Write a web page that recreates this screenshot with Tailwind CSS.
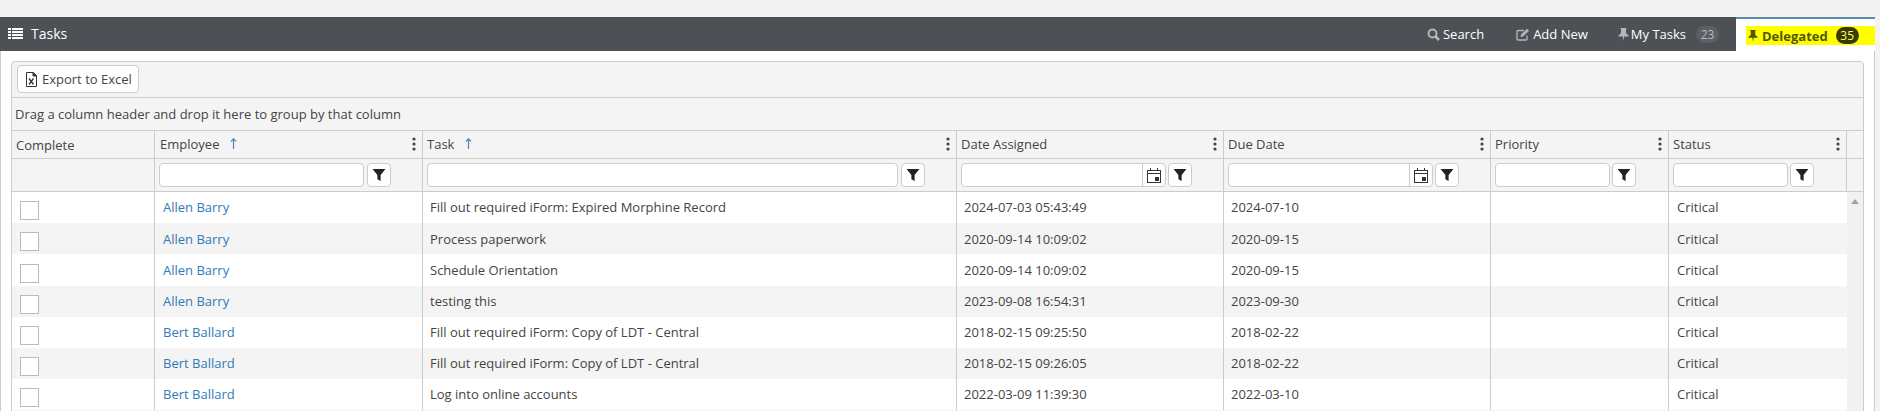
<!DOCTYPE html>
<html>
<head>
<meta charset="utf-8">
<script src="https://cdn.jsdelivr.net/npm/@tailwindcss/browser@4"></script>
</head>
<body class="h-[411px] overflow-hidden bg-[#f3f3f3] pt-[17px] font-['Open_Sans',sans-serif] text-[13px] leading-[18px] text-[#444]">
<div class="mr-[5px]">
  <header class="flex h-[34px] bg-[#4d5055] text-white">
    <div class="flex items-center flex-1 pl-[8px] gap-[8px]">
      <svg class="w-[15px] h-[12px]" viewBox="0 0 15 12" fill="#fff"><path d="M0 0h3v2H0zM4 0h11v2H4zM0 3h3v2H0zM4 3h11v2H4zM0 6h3v2H0zM4 6h11v2H4zM0 9h3v2H0zM4 9h11v2H4z"/></svg>
      <span class="text-[14px]">Tasks</span>
    </div>
    <nav class="flex items-center">
      <a class="flex items-center gap-[3px] mr-[32px]">
        <svg class="w-[13px] h-[13px]" viewBox="0 0 13 13" fill="none" stroke="#b5b7ba" stroke-width="2"><circle cx="5.5" cy="5.5" r="4"/><path d="M8.5 8.5l3.5 3.500" stroke-width="2.6"/></svg>
        <span>Search</span>
      </a>
      <a class="flex items-center gap-[3px] mr-[30px]">
        <svg class="w-[14px] h-[13px]" viewBox="0 0 14 13" fill="none" stroke="#b5b7ba" stroke-width="1.3"><path d="M11 7.5V11a1 1 0 0 1-1 1H2a1 1 0 0 1-1-1V3.500a1 1 0 0 1 1-1h6"/><path d="M5 6.500L11 .8l2 2-6 5.700-2.500.5z" fill="#b5b7ba" stroke="none"/></svg>
        <span>Add New</span>
      </a>
      <a class="flex items-center gap-[2px] mr-[17px]">
        <svg class="w-[11px] h-[13px]" viewBox="0 0 11 13" fill="#b5b7ba"><path d="M2.500 0h6v1H8v4l2.500 2.500V8.500H6.200L5.500 13l-.7-4.500H.5v-1L3 5V1h-.5z"/></svg>
        <span>My Tasks</span>
        <span class="ml-[8px] w-[23px] h-[17px] rounded-full bg-[#5c5f63] text-[#b8babc] text-[12px] leading-[17px] text-center">23</span>
      </a>
      <a class="w-[139px] h-[34px] bg-white border-t-2 border-[#5a8ba6] pt-[7px] pl-[10px]">
        <span class="flex items-center h-[19px] bg-[#ffff00] text-[#555500] font-bold">
          <svg class="ml-[2px] w-[10px] h-[12px] mr-[4px]" viewBox="0 0 11 13" fill="#555500"><path d="M2.500 0h6v1H8v4l2.500 2.500V8.500H6.200L5.500 13l-.7-4.500H.5v-1L3 5V1h-.5z"/></svg>
          <span>Delegated</span>
          <span class="ml-[8px] w-[23px] h-[17px] rounded-full bg-[#3a3a00] text-[#ffff66] font-normal text-[12px] leading-[17px] text-center">35</span>
        </span>
      </a>
    </nav>
  </header>

  <main class="h-[360px] overflow-hidden bg-white border-x border-[#ccc] pt-[10px] pl-[10px] pr-[10px]">
    <section class="border border-[#ccc] rounded-t-[4px] bg-[#f4f4f4]">
      <div class="h-[36px] flex items-start pt-[3px] pl-[5px] border-b border-[#ccc]">
        <button class="flex items-center gap-[4px] h-[28px] w-[122px] pl-[7px] bg-white border border-[#ccc] rounded-[4px]">
          <svg class="w-[13px] h-[15px]" viewBox="0 0 13 15" fill="none" stroke="#333"><path d="M1.500.5h7l3 3v11h-10z"/><path d="M8 .5v3.500h3.500" fill="#333"/><path d="M4 6.500l4.500 6M8.500 6.500l-4.500 6" stroke-width="1.300"/></svg>
          <span>Export to Excel</span>
        </button>
      </div>
      <div class="h-[33px] flex items-center pl-[3px] border-b border-[#ccc]">Drag a column header and drop it here to group by that column</div>

      <div class="grid grid-cols-[143px_268px_534px_267px_267px_178px_178px_16px] h-[28px] border-b border-[#ccc] items-stretch">
        <div class="flex items-center pl-[4px] border-r border-[#ccc]">Complete</div>
        <div class="flex items-center pb-[2px] pl-[5px] pr-[6px] border-r border-[#ccc]"><span>Employee</span><svg class="ml-[11px] w-[7px] h-[11px]" viewBox="0 0 7 11" fill="none" stroke="#4a86c5" stroke-width="1.200"><path d="M3.500 11V1M1 3.500L3.500.8 6 3.500"/></svg><svg class="ml-auto w-[4px] h-[14px]" viewBox="0 0 4 14" fill="#444"><circle cx="2" cy="2" r="1.600"/><circle cx="2" cy="7" r="1.600"/><circle cx="2" cy="12" r="1.600"/></svg></div>
        <div class="flex items-center pb-[2px] pl-[4px] pr-[6px] border-r border-[#ccc]"><span>Task</span><svg class="ml-[11px] w-[7px] h-[11px]" viewBox="0 0 7 11" fill="none" stroke="#4a86c5" stroke-width="1.200"><path d="M3.500 11V1M1 3.500L3.500.8 6 3.500"/></svg><svg class="ml-auto w-[4px] h-[14px]" viewBox="0 0 4 14" fill="#444"><circle cx="2" cy="2" r="1.600"/><circle cx="2" cy="7" r="1.600"/><circle cx="2" cy="12" r="1.600"/></svg></div>
        <div class="flex items-center justify-between pb-[2px] pl-[4px] pr-[6px] border-r border-[#ccc]"><span>Date Assigned</span><svg class="w-[4px] h-[14px]" viewBox="0 0 4 14" fill="#444"><circle cx="2" cy="2" r="1.600"/><circle cx="2" cy="7" r="1.600"/><circle cx="2" cy="12" r="1.600"/></svg></div>
        <div class="flex items-center justify-between pb-[2px] pl-[4px] pr-[6px] border-r border-[#ccc]"><span>Due Date</span><svg class="w-[4px] h-[14px]" viewBox="0 0 4 14" fill="#444"><circle cx="2" cy="2" r="1.600"/><circle cx="2" cy="7" r="1.600"/><circle cx="2" cy="12" r="1.600"/></svg></div>
        <div class="flex items-center justify-between pb-[2px] pl-[4px] pr-[6px] border-r border-[#ccc]"><span>Priority</span><svg class="w-[4px] h-[14px]" viewBox="0 0 4 14" fill="#444"><circle cx="2" cy="2" r="1.600"/><circle cx="2" cy="7" r="1.600"/><circle cx="2" cy="12" r="1.600"/></svg></div>
        <div class="flex items-center justify-between pb-[2px] pl-[4px] pr-[6px] border-r border-[#ccc]"><span>Status</span><svg class="w-[4px] h-[14px]" viewBox="0 0 4 14" fill="#444"><circle cx="2" cy="2" r="1.600"/><circle cx="2" cy="7" r="1.600"/><circle cx="2" cy="12" r="1.600"/></svg></div>
        <div></div>
      </div>

      <div class="grid grid-cols-[143px_268px_534px_267px_267px_178px_178px_16px] h-[33px] border-b border-[#ccc] items-stretch">
        <div class="border-r border-[#ccc]"></div>
        <div class="flex items-center gap-[3px] pl-[4px] pr-[31px] border-r border-[#ccc]"><div class="flex-1 h-[24px] bg-white border border-[#ccc] rounded-[4px]"></div><div class="flex items-center justify-center w-[24px] h-[24px] bg-white border border-[#ccc] rounded-[4px]"><svg class="w-[14px] h-[14px]" viewBox="0 0 13 13" fill="#222"><path d="M.5 1h12L8 6.500V12l-3-1.500v-4z"/></svg></div></div>
        <div class="flex items-center gap-[3px] pl-[4px] pr-[31px] border-r border-[#ccc]"><div class="flex-1 h-[24px] bg-white border border-[#ccc] rounded-[4px]"></div><div class="flex items-center justify-center w-[24px] h-[24px] bg-white border border-[#ccc] rounded-[4px]"><svg class="w-[14px] h-[14px]" viewBox="0 0 13 13" fill="#222"><path d="M.5 1h12L8 6.500V12l-3-1.500v-4z"/></svg></div></div>
        <div class="flex items-center gap-[2px] pl-[4px] pr-[31px] border-r border-[#ccc]"><div class="flex-1 flex justify-end h-[24px] bg-white border border-[#ccc] rounded-[4px]"><div class="flex items-center justify-center w-[23px] border-l border-[#ccc]"><svg class="w-[14px] h-[15px]" viewBox="0 0 14 15" fill="none" stroke="#333"><rect x=".5" y="2.500" width="13" height="12"/><path d="M.5 5.500h13M3.500 0v3M10.500 0v3"/><rect x="8.500" y="9.500" width="3" height="3" fill="#333"/></svg></div></div><div class="flex items-center justify-center w-[24px] h-[24px] bg-white border border-[#ccc] rounded-[4px]"><svg class="w-[14px] h-[14px]" viewBox="0 0 13 13" fill="#222"><path d="M.5 1h12L8 6.500V12l-3-1.500v-4z"/></svg></div></div>
        <div class="flex items-center gap-[2px] pl-[4px] pr-[31px] border-r border-[#ccc]"><div class="flex-1 flex justify-end h-[24px] bg-white border border-[#ccc] rounded-[4px]"><div class="flex items-center justify-center w-[23px] border-l border-[#ccc]"><svg class="w-[14px] h-[15px]" viewBox="0 0 14 15" fill="none" stroke="#333"><rect x=".5" y="2.500" width="13" height="12"/><path d="M.5 5.500h13M3.500 0v3M10.500 0v3"/><rect x="8.500" y="9.500" width="3" height="3" fill="#333"/></svg></div></div><div class="flex items-center justify-center w-[24px] h-[24px] bg-white border border-[#ccc] rounded-[4px]"><svg class="w-[14px] h-[14px]" viewBox="0 0 13 13" fill="#222"><path d="M.5 1h12L8 6.500V12l-3-1.500v-4z"/></svg></div></div>
        <div class="flex items-center gap-[2px] pl-[4px] pr-[32px] border-r border-[#ccc]"><div class="flex-1 h-[24px] bg-white border border-[#ccc] rounded-[4px]"></div><div class="flex items-center justify-center w-[24px] h-[24px] bg-white border border-[#ccc] rounded-[4px]"><svg class="w-[14px] h-[14px]" viewBox="0 0 13 13" fill="#222"><path d="M.5 1h12L8 6.500V12l-3-1.500v-4z"/></svg></div></div>
        <div class="flex items-center gap-[2px] pl-[4px] pr-[32px] border-r border-[#ccc]"><div class="flex-1 h-[24px] bg-white border border-[#ccc] rounded-[4px]"></div><div class="flex items-center justify-center w-[24px] h-[24px] bg-white border border-[#ccc] rounded-[4px]"><svg class="w-[14px] h-[14px]" viewBox="0 0 13 13" fill="#222"><path d="M.5 1h12L8 6.500V12l-3-1.500v-4z"/></svg></div></div>
        <div></div>
      </div>

      <div class="flex">
        <div class="flex-1">
          <div class="grid grid-cols-[143px_268px_534px_267px_267px_178px_178px] h-[31px] items-stretch bg-white [&>*]:pb-[2px]">
            <div class="flex items-center pl-[8px] border-r border-[#ccc]"><span class="w-[19px] h-[19px] mt-[8px] bg-white border border-[#bbb]"></span></div>
            <a class="flex items-center pl-[8px] border-r border-[#ccc] text-[#337ab7]">Allen Barry</a>
            <div class="flex items-center pl-[7px] border-r border-[#ccc]">Fill out required iForm: Expired Morphine Record</div>
            <div class="flex items-center pl-[7px] border-r border-[#ccc]">2024-07-03 05:43:49</div>
            <div class="flex items-center pl-[7px] border-r border-[#ccc]">2024-07-10</div>
            <div class="border-r border-[#ccc]"></div>
            <div class="flex items-center pl-[8px]">Critical</div>
          </div>
          <div class="grid grid-cols-[143px_268px_534px_267px_267px_178px_178px] h-[31px] items-stretch bg-[#f4f4f4]">
            <div class="flex items-center pl-[8px] pb-[2px] border-r border-[#ccc]"><span class="w-[19px] h-[19px] mt-[8px] bg-white border border-[#bbb]"></span></div>
            <a class="flex items-center pl-[8px] border-r border-[#ccc] text-[#337ab7]">Allen Barry</a>
            <div class="flex items-center pl-[7px] border-r border-[#ccc]">Process paperwork</div>
            <div class="flex items-center pl-[7px] border-r border-[#ccc]">2020-09-14 10:09:02</div>
            <div class="flex items-center pl-[7px] border-r border-[#ccc]">2020-09-15</div>
            <div class="border-r border-[#ccc]"></div>
            <div class="flex items-center pl-[8px]">Critical</div>
          </div>
          <div class="grid grid-cols-[143px_268px_534px_267px_267px_178px_178px] h-[32px] items-stretch bg-white">
            <div class="flex items-center pl-[8px] pb-[2px] border-r border-[#ccc]"><span class="w-[19px] h-[19px] mt-[8px] bg-white border border-[#bbb]"></span></div>
            <a class="flex items-center pl-[8px] border-r border-[#ccc] text-[#337ab7]">Allen Barry</a>
            <div class="flex items-center pl-[7px] border-r border-[#ccc]">Schedule Orientation</div>
            <div class="flex items-center pl-[7px] border-r border-[#ccc]">2020-09-14 10:09:02</div>
            <div class="flex items-center pl-[7px] border-r border-[#ccc]">2020-09-15</div>
            <div class="border-r border-[#ccc]"></div>
            <div class="flex items-center pl-[8px]">Critical</div>
          </div>
          <div class="grid grid-cols-[143px_268px_534px_267px_267px_178px_178px] h-[31px] items-stretch bg-[#f4f4f4] [&>*]:pb-[2px]">
            <div class="flex items-center pl-[8px] border-r border-[#ccc]"><span class="w-[19px] h-[19px] mt-[8px] bg-white border border-[#bbb]"></span></div>
            <a class="flex items-center pl-[8px] border-r border-[#ccc] text-[#337ab7]">Allen Barry</a>
            <div class="flex items-center pl-[7px] border-r border-[#ccc]">testing this</div>
            <div class="flex items-center pl-[7px] border-r border-[#ccc]">2023-09-08 16:54:31</div>
            <div class="flex items-center pl-[7px] border-r border-[#ccc]">2023-09-30</div>
            <div class="border-r border-[#ccc]"></div>
            <div class="flex items-center pl-[8px]">Critical</div>
          </div>
          <div class="grid grid-cols-[143px_268px_534px_267px_267px_178px_178px] h-[31px] items-stretch bg-white [&>*]:pb-[2px]">
            <div class="flex items-center pl-[8px] border-r border-[#ccc]"><span class="w-[19px] h-[19px] mt-[8px] bg-white border border-[#bbb]"></span></div>
            <a class="flex items-center pl-[8px] border-r border-[#ccc] text-[#337ab7]">Bert Ballard</a>
            <div class="flex items-center pl-[7px] border-r border-[#ccc]">Fill out required iForm: Copy of LDT - Central</div>
            <div class="flex items-center pl-[7px] border-r border-[#ccc]">2018-02-15 09:25:50</div>
            <div class="flex items-center pl-[7px] border-r border-[#ccc]">2018-02-22</div>
            <div class="border-r border-[#ccc]"></div>
            <div class="flex items-center pl-[8px]">Critical</div>
          </div>
          <div class="grid grid-cols-[143px_268px_534px_267px_267px_178px_178px] h-[31px] items-stretch bg-[#f4f4f4] [&>*]:pb-[2px]">
            <div class="flex items-center pl-[8px] border-r border-[#ccc]"><span class="w-[19px] h-[19px] mt-[8px] bg-white border border-[#bbb]"></span></div>
            <a class="flex items-center pl-[8px] border-r border-[#ccc] text-[#337ab7]">Bert Ballard</a>
            <div class="flex items-center pl-[7px] border-r border-[#ccc]">Fill out required iForm: Copy of LDT - Central</div>
            <div class="flex items-center pl-[7px] border-r border-[#ccc]">2018-02-15 09:26:05</div>
            <div class="flex items-center pl-[7px] border-r border-[#ccc]">2018-02-22</div>
            <div class="border-r border-[#ccc]"></div>
            <div class="flex items-center pl-[8px]">Critical</div>
          </div>
          <div class="grid grid-cols-[143px_268px_534px_267px_267px_178px_178px] h-[31px] items-stretch bg-white [&>*]:pb-[2px]">
            <div class="flex items-center pl-[8px] border-r border-[#ccc]"><span class="w-[19px] h-[19px] mt-[8px] bg-white border border-[#bbb]"></span></div>
            <a class="flex items-center pl-[8px] border-r border-[#ccc] text-[#337ab7]">Bert Ballard</a>
            <div class="flex items-center pl-[7px] border-r border-[#ccc]">Log into online accounts</div>
            <div class="flex items-center pl-[7px] border-r border-[#ccc]">2022-03-09 11:39:30</div>
            <div class="flex items-center pl-[7px] border-r border-[#ccc]">2022-03-10</div>
            <div class="border-r border-[#ccc]"></div>
            <div class="flex items-center pl-[8px]">Critical</div>
          </div>
          <div class="h-[31px] bg-[#f4f4f4]"></div>
        </div>
        <div class="w-[16px] bg-[#f1f1f1] pt-[7px] flex justify-center items-start">
          <svg class="w-[8px] h-[5px]" viewBox="0 0 8 5" fill="#a3a3a3"><path d="M4 0l4 5H0z"/></svg>
        </div>
      </div>
    </section>
  </main>
</div>
</body>
</html>
